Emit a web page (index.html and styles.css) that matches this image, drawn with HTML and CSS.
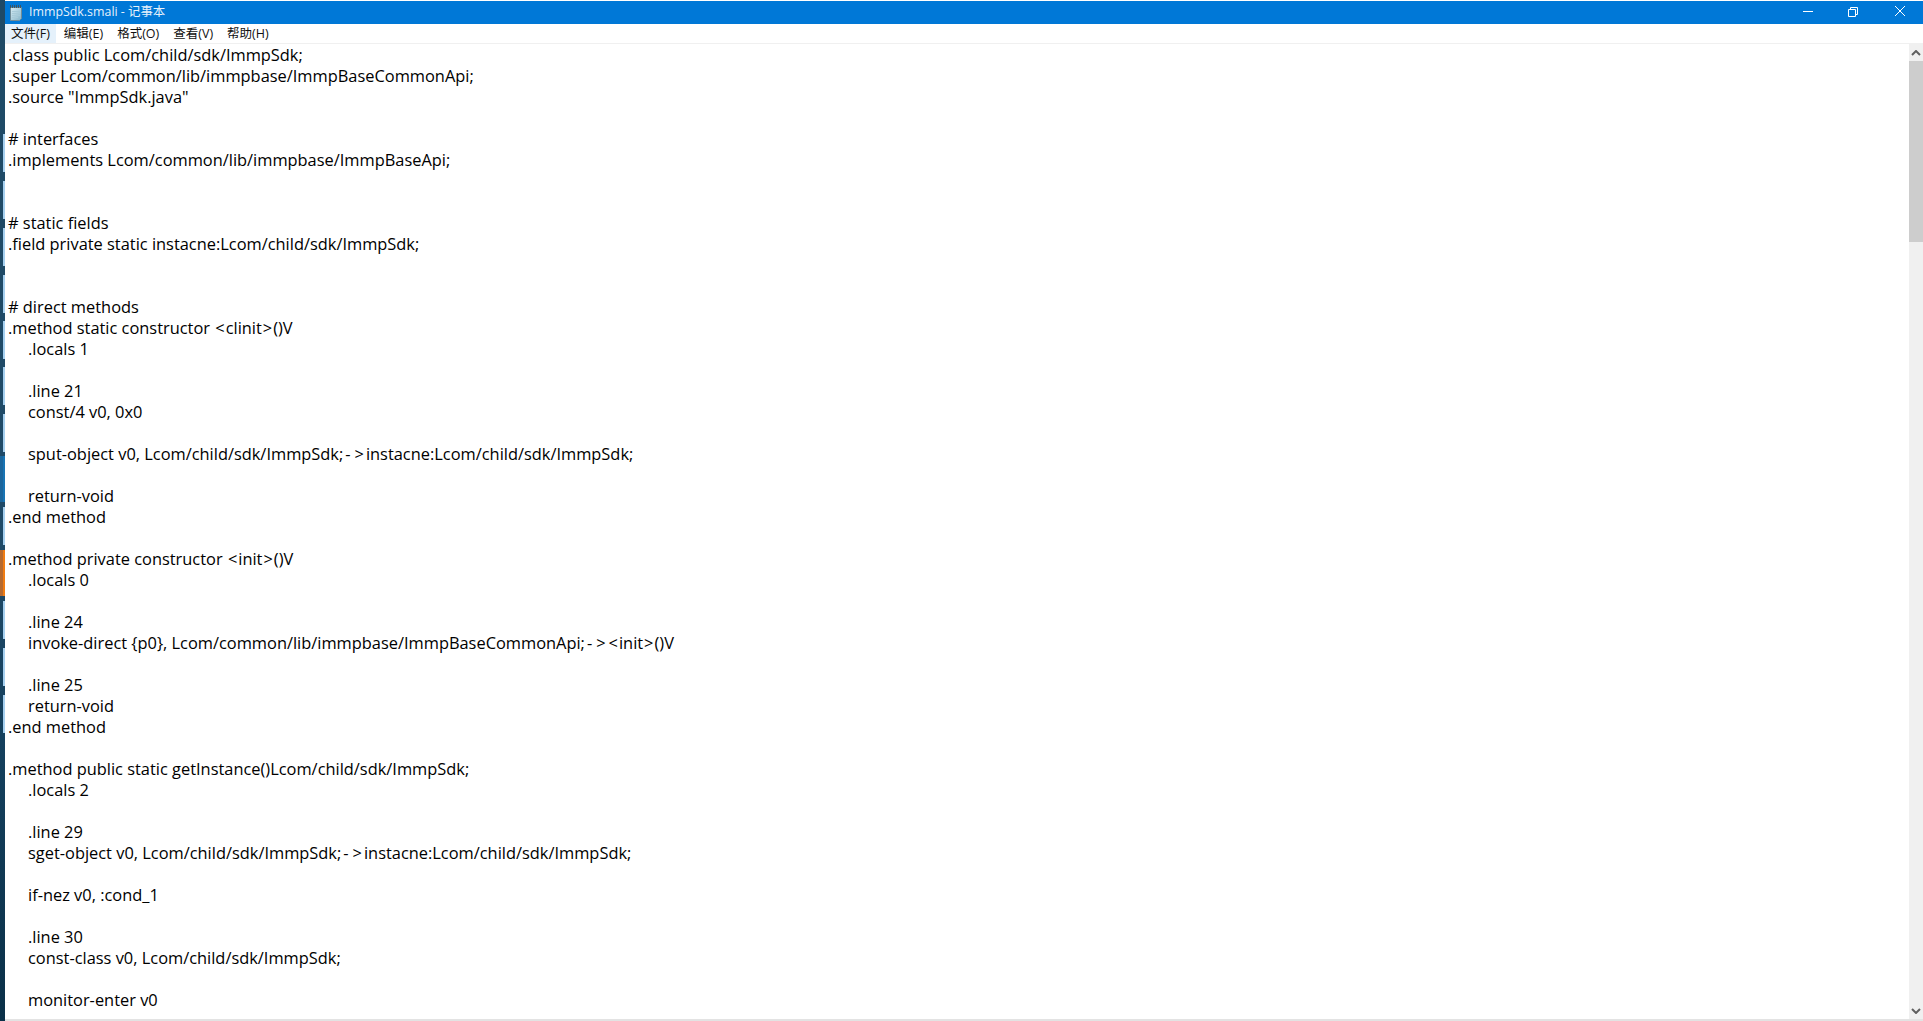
FILE: index.html
```html
<!DOCTYPE html>
<html lang="zh">
<head><meta charset="utf-8"><title>ImmpSdk.smali - 记事本</title><link rel="stylesheet" href="styles.css"></head>
<body>
<div class="desk"></div>
<div class="window">
  <div class="titlebar">
    <svg class="appicon" width="16" height="16" viewBox="0 0 16 16"><defs><linearGradient id="pg" x1="0" y1="0" x2="1" y2="1"><stop offset="0" stop-color="#d8edf5"/><stop offset="1" stop-color="#86b4c8"/></linearGradient></defs><path d="M2.5 2.5h11v11l-2 2h-9z" fill="url(#pg)" stroke="#6f8a96"/><path d="M2 1.5h12" stroke="#3f5560" stroke-width="3" stroke-dasharray="1 1"/><path d="M4 6.5h8M4 8.5h8M4 10.5h8M4 12.5h6" stroke="#a8cbd9"/></svg>
    <span class="title">ImmpSdk.smali - 记事本</span>
    <div class="controls">
      <svg class="ctl" width="46" height="23" viewBox="0 0 46 23"><path d="M18 10.5h10" stroke="#fff"/></svg>
      <svg class="ctl" width="46" height="23" viewBox="0 0 46 23"><path d="M17.5 8.5h7v7h-7zM19.5 8.5v-2h7v7h-2" fill="none" stroke="#fff"/></svg>
      <svg class="ctl" width="46" height="23" viewBox="0 0 46 23"><path d="M18 5l10 10M28 5l-10 10" stroke="#fff"/></svg>
    </div>
  </div>
  <div class="menubar">
    <span class="menu active">文件(F)</span><span class="menu">编辑(E)</span><span class="menu">格式(O)</span><span class="menu">查看(V)</span><span class="menu">帮助(H)</span>
  </div>
  <div class="client">
    <div class="editor">
<div class="ln">.class public Lcom/child/sdk/ImmpSdk;</div>
<div class="ln">.super Lcom/common/lib/immpbase/ImmpBaseCommonApi;</div>
<div class="ln">.source "ImmpSdk.java"</div>
<div class="ln"></div>
<div class="ln"># interfaces</div>
<div class="ln">.implements Lcom/common/lib/immpbase/ImmpBaseApi;</div>
<div class="ln"></div>
<div class="ln"></div>
<div class="ln"># static fields</div>
<div class="ln">.field private static instacne:Lcom/child/sdk/ImmpSdk;</div>
<div class="ln"></div>
<div class="ln"></div>
<div class="ln"># direct methods</div>
<div class="ln">.method static constructor <span class="op">&lt;</span>clinit<span class="op">&gt;</span>()V</div>
<div class="ln in">.locals 1</div>
<div class="ln"></div>
<div class="ln in">.line 21</div>
<div class="ln in">const/4 v0, 0x0</div>
<div class="ln"></div>
<div class="ln in">sput-object v0, Lcom/child/sdk/ImmpSdk;<span class="to"><span class="dash">-</span>&gt;</span>instacne:Lcom/child/sdk/ImmpSdk;</div>
<div class="ln"></div>
<div class="ln in">return-void</div>
<div class="ln">.end method</div>
<div class="ln"></div>
<div class="ln">.method private constructor <span class="op">&lt;</span>init<span class="op">&gt;</span>()V</div>
<div class="ln in">.locals 0</div>
<div class="ln"></div>
<div class="ln in">.line 24</div>
<div class="ln in">invoke-direct {p0}, Lcom/common/lib/immpbase/ImmpBaseCommonApi;<span class="to"><span class="dash">-</span>&gt;</span><span class="op">&lt;</span>init<span class="op">&gt;</span>()V</div>
<div class="ln"></div>
<div class="ln in">.line 25</div>
<div class="ln in">return-void</div>
<div class="ln">.end method</div>
<div class="ln"></div>
<div class="ln">.method public static getInstance()Lcom/child/sdk/ImmpSdk;</div>
<div class="ln in">.locals 2</div>
<div class="ln"></div>
<div class="ln in">.line 29</div>
<div class="ln in">sget-object v0, Lcom/child/sdk/ImmpSdk;<span class="to"><span class="dash">-</span>&gt;</span>instacne:Lcom/child/sdk/ImmpSdk;</div>
<div class="ln"></div>
<div class="ln in">if-nez v0, :cond_1</div>
<div class="ln"></div>
<div class="ln in">.line 30</div>
<div class="ln in">const-class v0, Lcom/child/sdk/ImmpSdk;</div>
<div class="ln"></div>
<div class="ln in">monitor-enter v0</div>
    </div>
    <div class="scrollbar">
      <div class="arrow"><svg width="10" height="6" viewBox="0 0 10 6"><path d="M1 5l4-4 4 4" fill="none" stroke="#606060" stroke-width="2"/></svg></div>
      <div class="track"><div class="thumb"></div></div>
      <div class="arrow"><svg width="10" height="6" viewBox="0 0 10 6"><path d="M1 1l4 4 4-4" fill="none" stroke="#606060" stroke-width="2"/></svg></div>
    </div>
  </div>
  <div class="statusline"></div>
</div>
</body>
</html>
```
FILE: styles.css
```css
html, body { margin: 0; height: 100%; overflow: hidden; background: #fff; }
body { display: flex; height: 1021px; width: 1923px; font-family: "Open Sans", "Noto Sans CJK SC", sans-serif; color: #000; }
.desk {
  width: 5px; flex: none;
  background-color: #1f4a6a;
  background-image:
    linear-gradient(to bottom,
      transparent 134px, #a6d0f0 134px, #a6d0f0 172px, transparent 172px,
      transparent 181px, #a6d0f0 181px, #a6d0f0 219px, transparent 219px,
      transparent 228px, #a6d0f0 228px, #a6d0f0 266px, transparent 266px,
      transparent 275px, #a6d0f0 275px, #a6d0f0 313px, transparent 313px,
      transparent 321px, #a6d0f0 321px, #a6d0f0 359px, transparent 359px,
      transparent 367px, #a6d0f0 367px, #a6d0f0 405px, transparent 405px,
      transparent 414px, #a6d0f0 414px, #a6d0f0 452px, transparent 452px,
      transparent 456px, #1874b4 456px, #1874b4 502px, transparent 502px,
      transparent 507px, #a6d0f0 507px, #a6d0f0 545px, transparent 545px,
      transparent 550px, #f07c12 550px, #f07c12 596px, transparent 596px,
      transparent 601px, #a6d0f0 601px, #a6d0f0 639px, transparent 639px,
      transparent 648px, #a6d0f0 648px, #a6d0f0 686px, transparent 686px,
      transparent 695px, #a6d0f0 695px, #a6d0f0 733px, transparent 733px),
    linear-gradient(to bottom,
      transparent 456px, #1b659c 456px, #1b659c 502px, transparent 502px,
      transparent 550px, #b5692f 550px, #b5692f 596px, transparent 596px),
    linear-gradient(to bottom, #1f4a66 0, #1f4a68 540px, #143f5c 760px, #0a3048 100%);
  background-size: 2px 100%, 100% 100%, 100% 100%;
  background-position: right top, left top, left top;
  background-repeat: no-repeat;
}
.window { flex: 1; display: flex; flex-direction: column; min-width: 0; padding-top: 1px; box-sizing: border-box; }
.titlebar { height: 23px; background: #0078d7; display: flex; align-items: center; color: #fff; flex: none; }
.appicon { margin: 0 5px 0 3px; }
.title { font-size: 12.4px; line-height: 20px; padding-bottom: 2px; color: #e6f1fb; }
.controls { margin-left: auto; display: flex; }
.ctl { display: block; }
.menubar { height: 19px; display: flex; align-items: center; background: #fff; flex: none; font-size: 12.5px; border-bottom: 1px solid #f0f0f0; }
.menu { padding: 0 6px; height: 19px; line-height: 19px; margin-right: 2px; color: #111; }
.menu.active { background: #e5f1fb; }
.client { flex: 1; display: flex; min-height: 0; }
.editor { flex: 1; padding: 0 0 0 3px; overflow: hidden; font-size: 16.4px; line-height: 21px; }
.ln { height: 21px; white-space: pre; }
.in { padding-left: 20px; }
.op { padding: 0 1px; }
.to { padding: 0 2px; }
.dash { margin-right: 4px; }
.scrollbar { width: 14px; flex: none; background: #f0f0f0; display: flex; flex-direction: column; }
.arrow { height: 17px; display: flex; align-items: center; justify-content: center; flex: none; }
.track { flex: 1; }
.thumb { height: 181px; background: #cdcdcd; }
.statusline { height: 2px; background: #e3e3e3; flex: none; }
```
